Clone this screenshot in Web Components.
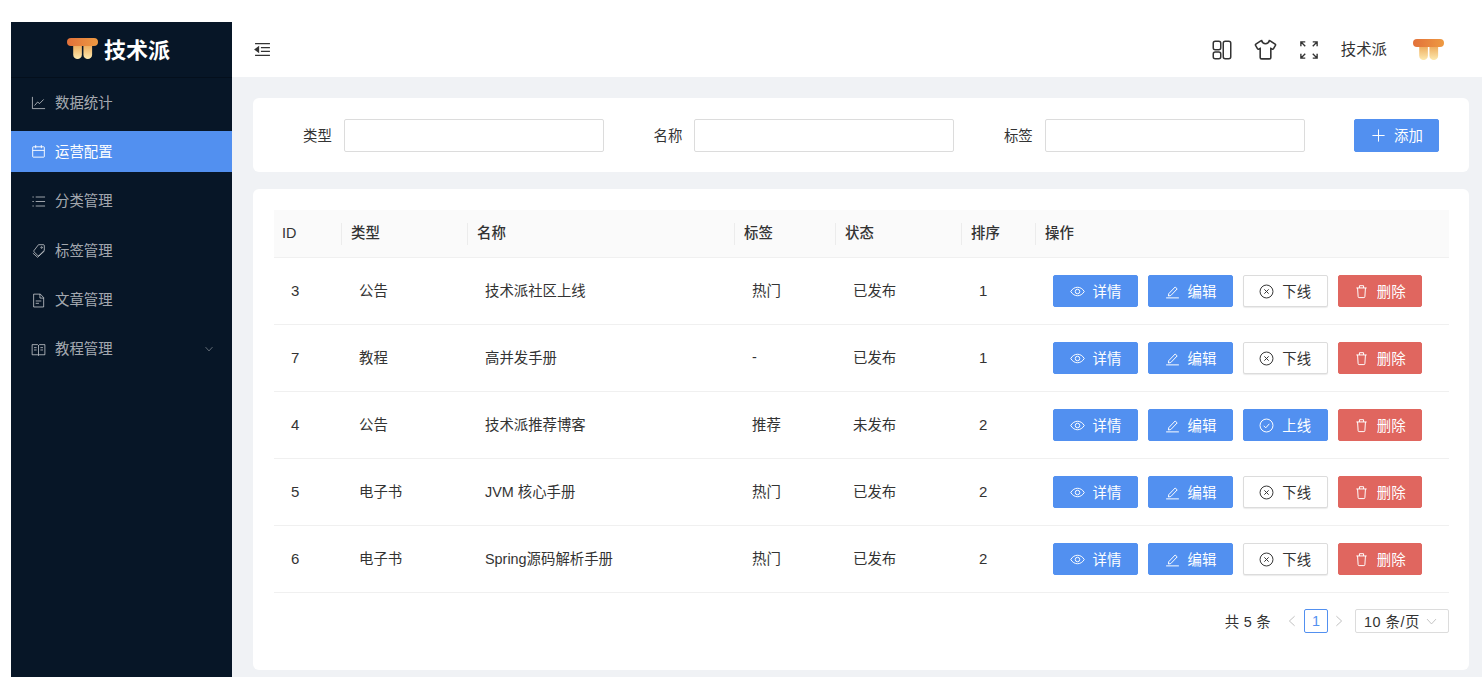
<!DOCTYPE html>
<html lang="zh">
<head>
<meta charset="utf-8">
<title>技术派</title>
<style>
  html, body { height: 100%; }
  body {
    margin: 0;
    padding: 22px 0 0 11px;
    box-sizing: border-box;
    overflow: hidden;
    background: #fff;
    color: #333;
    font: 14.4px "Liberation Sans", "Noto Sans CJK SC", sans-serif;
  }
</style>
</head>
<body>
<admin-layout>
  <side-nav slot="side">
    <nav-item icon="chart">数据统计</nav-item>
    <nav-item icon="calendar" active>运营配置</nav-item>
    <nav-item icon="list">分类管理</nav-item>
    <nav-item icon="tag">标签管理</nav-item>
    <nav-item icon="file">文章管理</nav-item>
    <nav-item icon="book" arrow>教程管理</nav-item>
  </side-nav>
  <top-bar slot="top"></top-bar>
  <filter-bar>
    <filter-field label="类型"></filter-field>
    <filter-field label="名称"></filter-field>
    <filter-field label="标签"></filter-field>
  </filter-bar>
  <data-table></data-table>
</admin-layout>

<script>
const ICONS = {
  chart: '<path d="M1.500 2v12.500H15"/><path d="M3.800 11.200l3.200-3.700 2.200 1.600 4.300-4.400"/>',
  calendar: '<rect x="1.800" y="3" width="12.400" height="11" rx=".5"/><path d="M1.800 6.800h12.400M5 1.200v3.300M11 1.200v3.300"/>',
  list: '<path d="M5 3.200H15M5 8H15M5 12.800H15"/><path d="M1.500 3.200h1.500M1.500 8h1.500M1.500 12.800h1.500"/>',
  tag: '<path d="M8 1.800h5.200a1 1 0 0 1 1 1v5L8.600 13.300a1 1 0 0 1-1.400 0L3.200 9.400a1 1 0 0 1 0-1.400z"/><path d="M2 10.800l5 4.400 7.500-6.800"/><circle cx="11.300" cy="4.800" r=".8"/>',
  file: '<path d="M2.800 1.200h7.200l3.500 3.700v10H2.800z"/><path d="M9.500 1.200v4.200h4M5 8.500h6M5 11h3.500"/>',
  book: '<path d="M1.200 2.800h5.800l1 1 1-1h5.800v10.800H9l-1 .6-1-.6H1.200zM8 3.800v10.400"/><path d="M3.200 6h2.800M3.200 8.500h2.800M10 6h2.800M10 8.500h2.800"/>',
  eye: '<path d="M.8 8c1.800-3 4.300-4.500 7.200-4.500S13.400 5 15.200 8c-1.800 3-4.300 4.500-7.200 4.500S2.600 11 .8 8z"/><circle cx="8" cy="8" r="2.400"/>',
  edit: '<path d="M4 10.300L10.800 3.200l2.200 2-6.800 7.100-2.600.5z"/><path d="M1.200 14.800h13.600"/>',
  close: '<circle cx="8" cy="8" r="6.900"/><path d="M5.700 5.700l4.600 4.600M10.300 5.700l-4.600 4.600"/>',
  check: '<circle cx="8" cy="8" r="6.900"/><path d="M5 8.300l2.200 2.200 3.800-4.300"/>',
  trash: '<path d="M2.500 4.200h11M5.800 4.200V1.800h4.400v2.400M3.800 4.200l.6 9.300a1 1 0 0 0 1 1h5.200a1 1 0 0 0 1-1l.6-9.300"/>',
  plus: '<path d="M8 1.500v13M1.500 8h13"/>',
  down: '<path d="M2.500 5l5.500 6 5.500-6"/>',
  left: '<path d="M11 2.500L5 8l6 5.500"/>',
  right: '<path d="M5 2.500l6 5.500-6 5.500"/>',
  outdent: '<path d="M1 2.500h14M6.500 6.200H15M6.500 9.800H15M1 13.500h14"/><path d="M4.200 5.800v4.400L1.200 8z" fill="currentColor"/>',
  layout: '<rect x="1" y="1" width="6" height="6.800" rx="1.600"/><rect x="1" y="9.500" width="6" height="5.500" rx="1.600"/><rect x="9" y="1" width="6" height="14" rx="1.600"/>',
  shirt: '<path d="M5.300 1.800c-.2 0-.4.100-.6.200L1.300 4.200a.8.800 0 0 0-.2 1l1.300 2.200a.8.800 0 0 0 1 .3l.9-.4v6.200a1 1 0 0 0 1 1h5.400a1 1 0 0 0 1-1V7.300l.9.4a.8.800 0 0 0 1-.3l1.300-2.200a.8.800 0 0 0-.2-1L11.300 2c-.2-.1-.4-.2-.6-.2C10.300 3.200 9.200 4 8 4S5.700 3.200 5.300 1.800z"/>',
  full: '<path d="M1.500 5v-3.500H5M2 2l3 3M11 1.500h3.500V5M14 2l-3 3M1.500 11v3.500H5M2 14l3-3M14.500 11v3.500H11M14 14l-3-3"/>'
};

function icon(name, size, width) {
  return `<svg width="${size}" height="${size}" viewBox="0 0 16 16" fill="none" stroke="currentColor" stroke-width="${width || 1.1}" style="display:block;flex:none">${ICONS[name]}</svg>`;
}

function logo(id, w) {
  return `<svg width="${w}" height="${w * 0.68}" viewBox="0 0 50 34" style="display:block;flex:none">
    <defs>
      <linearGradient id="${id}" x1="0" y1="0" x2="0" y2="1">
        <stop offset="0" stop-color="#e8963f"/><stop offset="1" stop-color="#fdeab0"/>
      </linearGradient>
      <linearGradient id="${id}b" x1="0" y1="0" x2="1" y2="0">
        <stop offset="0" stop-color="#e2713a"/><stop offset="1" stop-color="#ee9a42"/>
      </linearGradient>
    </defs>
    <rect x="10" y="4" width="14" height="30" rx="7" fill="url(#${id})"/>
    <rect x="26.500" y="4" width="14" height="30" rx="7" fill="url(#${id})"/>
    <rect x="0" y="0" width="50" height="13" rx="6.500" fill="url(#${id}b)"/>
  </svg>`;
}

class AdminLayout extends HTMLElement {
  constructor() {
    super();
    this.attachShadow({mode: "open"}).innerHTML = `
    <style>
      :host { display: flex; height: 655px; }
      .side { flex: 0 0 221px; }
      .main { flex: 1; min-width: 0; display: flex; flex-direction: column; background: #f0f2f5; }
      .body { flex: 1; display: flex; flex-direction: column; gap: 17px; padding: 21px 13px 0 21px; }
    </style>
    <div class="side"><slot name="side"></slot></div>
    <div class="main">
      <slot name="top"></slot>
      <div class="body"><slot></slot></div>
    </div>`;
  }
}

class SideNav extends HTMLElement {
  constructor() {
    super();
    this.attachShadow({mode: "open"}).innerHTML = `
    <style>
      :host { display: block; height: 100%; background: #071627; }
      .brand {
        height: 55px; padding: 0 6px 1px 0; box-sizing: border-box;
        display: flex; align-items: center; justify-content: center; gap: 6px;
        box-shadow: 0 1px 0 #040f1c;
        color: #fff; font-size: 22px; font-weight: 700;
      }
      .brand span { padding-bottom: 3px; }
      nav { display: flex; flex-direction: column; gap: 8.400px; padding-top: 5px; }
    </style>
    <div class="brand">${logo("lg1", 31)}<span>技术派</span></div>
    <nav><slot></slot></nav>`;
  }
}

class NavItem extends HTMLElement {
  constructor() {
    super();
    const on = this.hasAttribute("active");
    this.attachShadow({mode: "open"}).innerHTML = `
    <style>
      :host {
        display: flex; align-items: center; gap: 9px; height: 41px; padding: 0 18px 0 20px;
        font-size: 14.400px; color: ${on ? "#fff" : "rgba(255,255,255,.65)"};
        background: ${on ? "#5290f0" : "transparent"};
      }
      span { flex: 1; padding-bottom: 3px; }
      .arrow { opacity: .7; }
    </style>
    ${icon(this.getAttribute("icon"), 15, 1)}
    <span><slot></slot></span>
    ${this.hasAttribute("arrow") ? `<div class="arrow">${icon("down", 10, 1.3)}</div>` : ""}`;
  }
}

class TopBar extends HTMLElement {
  constructor() {
    super();
    this.attachShadow({mode: "open"}).innerHTML = `
    <style>
      :host {
        display: flex; align-items: center; height: 55px; background: #fff; color: #333;
        padding: 0 38px 0 22px;
      }
      .tools { margin-left: auto; display: flex; align-items: center; }
      .name { font-size: 15.400px; margin: 0 26px 0 22px; padding-bottom: 3px; }
    </style>
    ${icon("outdent", 17, 1.300)}
    <div class="tools">
      ${icon("layout", 20, 1.200)}
      <div style="width:22px"></div>
      ${icon("shirt", 23, 1.100)}
      <div style="width:22px"></div>
      ${icon("full", 20, 1.100)}
      <span class="name">技术派</span>
      ${logo("lg2", 31)}
    </div>`;
  }
}

class FilterField extends HTMLElement {
  constructor() {
    super();
    this.attachShadow({mode: "open"}).innerHTML = `
    <style>
      :host { display: flex; align-items: center; gap: 12.200px; flex: none; color: #333; font-size: 14.400px; }
      label { white-space: nowrap; padding-bottom: 2px; }
      input {
        flex: none; width: 260px; height: 33px; box-sizing: border-box; padding: 0 10px; margin: 0;
        border: 1px solid #dcdcdc; border-radius: 2px; background: #fff; outline: none;
      }
    </style>
    <label>${this.getAttribute("label")}</label><input>`;
  }
}

class FilterBar extends HTMLElement {
  constructor() {
    super();
    this.attachShadow({mode: "open"}).innerHTML = `
    <style>
      :host {
        display: flex; align-items: center; height: 74px; box-sizing: border-box;
        padding: 0 30px 0 50px; gap: 49.500px; background: #fff; border-radius: 6px;
      }
      action-btn { margin-left: auto; flex: none; width: 85px; height: 33px; }
    </style>
    <slot></slot>
    <action-btn kind="primary" icon="plus">添加</action-btn>`;
  }
}

class ActionBtn extends HTMLElement {
  constructor() {
    super();
    const colors = {
      primary: "background:#5290f0;color:#fff;border-color:#5290f0",
      danger: "background:#e0665f;color:#fff;border-color:#e0665f",
      plain: "background:#fff;color:#333;border-color:#dcdcdc;box-shadow:0 1px 1px rgba(0,0,0,.08)"
    };
    this.attachShadow({mode: "open"}).innerHTML = `
    <style>
      :host {
        display: inline-flex; align-items: center; justify-content: center; gap: 8px;
        height: 32px; box-sizing: border-box; border: 1px solid; border-radius: 2px;
        font-size: 14.400px; ${colors[this.getAttribute("kind")]};
      }
      span { padding-bottom: 2px; }
    </style>
    ${icon(this.getAttribute("icon"), 15, 1.050)}<span><slot></slot></span>`;
  }
}

const COLUMNS = "68px 126px 267px 101px 126px 74px 1fr";

class TableRow extends HTMLElement {
  constructor() {
    super();
    this.attachShadow({mode: "open"}).innerHTML = `
    <style>
      :host {
        display: grid; grid-template-columns: ${COLUMNS}; align-items: center;
        height: 67px; box-sizing: border-box; border-bottom: 1px solid #f0f0f0;
        color: #333; font-size: 14.400px;
      }
      div { padding: 0 0 3px 17px; }
      .num { font-size: 15px; padding-bottom: 1px; }
      .ops { display: flex; gap: 10px; padding-bottom: 0; }
      action-btn { flex: none; width: 85px; }
    </style>
    <div class="num"></div><div></div><div></div><div></div><div></div><div class="num"></div>
    <div class="ops"></div>`;
  }
  set row(r) {
    const cells = this.shadowRoot.querySelectorAll("div");
    [r.id, r.type, r.name, r.tag, r.status, r.sort].forEach((v, i) => cells[i].textContent = v);
    const online = r.status === "已发布";
    cells[6].innerHTML = `
      <action-btn kind="primary" icon="eye">详情</action-btn>
      <action-btn kind="primary" icon="edit">编辑</action-btn>
      <action-btn kind="${online ? "plain" : "primary"}" icon="${online ? "close" : "check"}" style="width:84.500px">${online ? "下线" : "上线"}</action-btn>
      <action-btn kind="danger" icon="trash" style="width:84.500px">删除</action-btn>`;
  }
}

class TablePager extends HTMLElement {
  constructor() {
    super();
    this.attachShadow({mode: "open"}).innerHTML = `
    <style>
      :host {
        display: flex; align-items: center; justify-content: flex-end; margin-top: 16px;
        color: #333; font-size: 14.400px;
      }
      .total { margin-right: 14px; letter-spacing: .3px; padding-bottom: 2px; }
      .page {
        width: 24px; height: 24px; box-sizing: border-box; margin: 0 4px 0 5px;
        display: flex; align-items: center; justify-content: center;
        border: 1px solid #5290f0; border-radius: 2px; color: #5290f0;
      }
      .arrow { color: #bdbdbd; }
      .size {
        width: 94px; height: 24px; box-sizing: border-box; margin-left: 9px; padding: 0 10px 0 8px;
        display: flex; align-items: center; justify-content: space-between;
        border: 1px solid #dcdcdc; border-radius: 2px;
      }
      .size span { letter-spacing: .5px; padding-bottom: 2px; }
      .size svg { color: #bdbdbd; }
    </style>
    <span class="total">共 5 条</span>
    <span class="arrow">${icon("left", 14)}</span>
    <span class="page">1</span>
    <span class="arrow">${icon("right", 14)}</span>
    <div class="size"><span>10 条/页</span>${icon("down", 13)}</div>`;
  }
}

class DataTable extends HTMLElement {
  constructor() {
    super();
    this.attachShadow({mode: "open"}).innerHTML = `
    <style>
      :host {
        display: block; height: 481px; box-sizing: border-box; padding: 21px 20px 0 21px;
        background: #fff; border-radius: 6px;
      }
      .head {
        display: grid; grid-template-columns: ${COLUMNS}; align-items: center;
        height: 48px; background: #fafafa; border-bottom: 1px solid #f0f0f0;
        color: #333; font-size: 14.400px; font-weight: 500; box-sizing: border-box;
      }
      .head div {
        margin-left: -1px; padding: 0 0 1px 9px; height: 22px; line-height: 20px;
        box-sizing: border-box; border-left: 1px solid #ececec;
      }
      .head div:first-child { margin-left: 0; padding-left: 8px; border-left: 0; }
    </style>
    <div class="head"><div>ID</div><div>类型</div><div>名称</div><div>标签</div><div>状态</div><div>排序</div><div>操作</div></div>
    <div class="rows"></div>
    <table-pager></table-pager>`;
  }
  set rows(list) {
    const box = this.shadowRoot.querySelector(".rows");
    list.forEach(r => {
      const el = document.createElement("table-row");
      el.row = r;
      box.appendChild(el);
    });
  }
}

customElements.define("admin-layout", AdminLayout);
customElements.define("side-nav", SideNav);
customElements.define("nav-item", NavItem);
customElements.define("top-bar", TopBar);
customElements.define("filter-field", FilterField);
customElements.define("action-btn", ActionBtn);
customElements.define("filter-bar", FilterBar);
customElements.define("table-row", TableRow);
customElements.define("table-pager", TablePager);
customElements.define("data-table", DataTable);

document.querySelector("data-table").rows = [
  {id: 3, type: "公告", name: "技术派社区上线", tag: "热门", status: "已发布", sort: 1},
  {id: 7, type: "教程", name: "高并发手册", tag: "-", status: "已发布", sort: 1},
  {id: 4, type: "公告", name: "技术派推荐博客", tag: "推荐", status: "未发布", sort: 2},
  {id: 5, type: "电子书", name: "JVM 核心手册", tag: "热门", status: "已发布", sort: 2},
  {id: 6, type: "电子书", name: "Spring源码解析手册", tag: "热门", status: "已发布", sort: 2}
];
</script>
</body>
</html>
